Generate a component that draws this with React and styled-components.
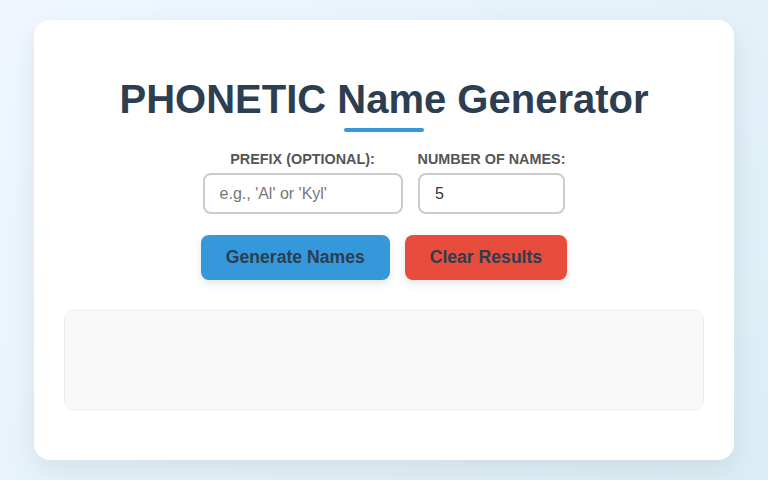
import React, { useState } from "react";
import styled, { createGlobalStyle } from "styled-components";

const GlobalStyle = createGlobalStyle`
  * { box-sizing: border-box; }
  html, body { margin: 0; padding: 0; }
  body {
    font-family: "Liberation Sans", Arial, sans-serif;
    background: linear-gradient(135deg, #f0f7ff 0%, #dbeef5 100%);
    min-height: 100vh;
  }
`;

const Page = styled.div`
  min-height: 100vh;
  display: flex;
  align-items: center;
  justify-content: center;
`;

const Card = styled.main`
  width: 700px;
  background: #fff;
  border-radius: 16px;
  padding: 30px 30px 50px;
  box-shadow: 0 10px 30px rgba(0, 0, 0, 0.08);
`;

const Title = styled.h1`
  margin: 25px 0 0;
  font-size: 40px;
  line-height: 48px;
  font-weight: 700;
  color: #2c3e50;
  text-align: center;

  &::after {
    content: "";
    display: block;
    width: 80px;
    height: 4px;
    margin: 5px auto 0;
    border-radius: 2px;
    background: #3498db;
  }
`;

const Form = styled.div`
  display: flex;
  justify-content: center;
  gap: 15px;
  margin-top: 19px;
`;

const Field = styled.div`
  display: flex;
  flex-direction: column;
  align-items: center;
  gap: 6px;
`;

const Label = styled.label`
  font-size: 14.4px;
  line-height: 16px;
  font-weight: 700;
  color: #555;
  text-transform: uppercase;
`;

const Input = styled.input`
  width: ${(p) => p.$width}px;
  height: 41px;
  padding: 0 15px;
  border: 2px solid #ccc;
  border-radius: 8px;
  font-family: inherit;
  font-size: 16px;
  color: #333;
  outline: none;

  &::placeholder {
    color: #777;
  }
`;

const Actions = styled.div`
  display: flex;
  justify-content: center;
  gap: 15px;
  margin-top: 21px;
`;

const Button = styled.button`
  height: 45px;
  padding: 0 25px;
  border: none;
  border-radius: 8px;
  background: ${(p) => (p.$danger ? "#e74c3c" : "#3498db")};
  color: #2c3e50;
  font-family: inherit;
  font-size: 17.6px;
  font-weight: 700;
  cursor: pointer;
  box-shadow: 0 4px 8px rgba(0, 0, 0, 0.1);
`;

const Results = styled.section`
  margin-top: 30px;
  height: 100px;
  background: #f9f9f9;
  border: 1px solid #eee;
  border-radius: 10px;
`;

export default function App() {
  const [prefix, setPrefix] = useState("");
  const [count, setCount] = useState("5");

  return (
    <Page>
      <GlobalStyle />
      <Card>
        <Title>PHONETIC Name Generator</Title>
        <Form>
          <Field>
            <Label htmlFor="prefix">Prefix (optional):</Label>
            <Input
              id="prefix"
              $width={200}
              placeholder="e.g., 'Al' or 'Kyl'"
              value={prefix}
              onChange={(e) => setPrefix(e.target.value)}
            />
          </Field>
          <Field>
            <Label htmlFor="count">Number of names:</Label>
            <Input
              id="count"
              $width={147}
              value={count}
              onChange={(e) => setCount(e.target.value)}
            />
          </Field>
        </Form>
        <Actions>
          <Button>Generate Names</Button>
          <Button $danger onClick={() => setPrefix("")}>
            Clear Results
          </Button>
        </Actions>
        <Results />
      </Card>
    </Page>
  );
}
